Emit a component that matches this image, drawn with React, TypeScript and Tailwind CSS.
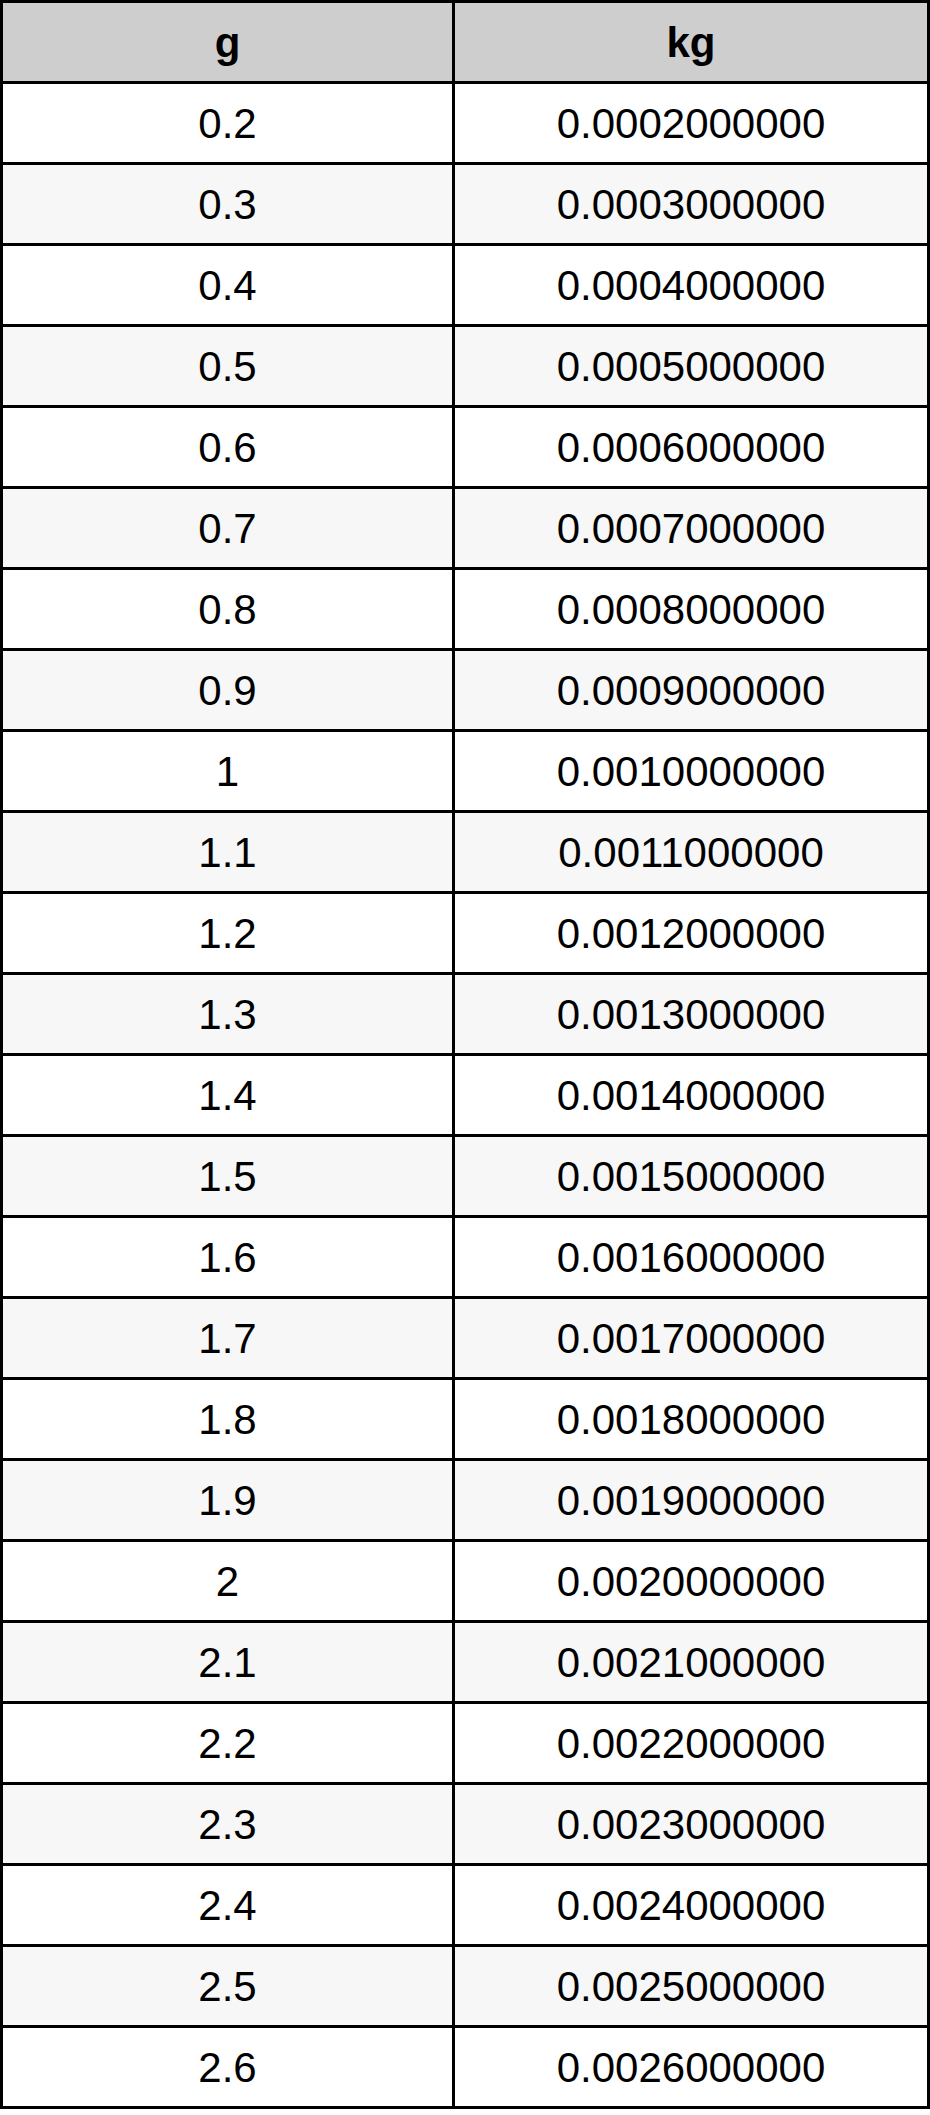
import React from "react";

const rows: [string, string][] = [
  ["0.2", "0.0002000000"],
  ["0.3", "0.0003000000"],
  ["0.4", "0.0004000000"],
  ["0.5", "0.0005000000"],
  ["0.6", "0.0006000000"],
  ["0.7", "0.0007000000"],
  ["0.8", "0.0008000000"],
  ["0.9", "0.0009000000"],
  ["1", "0.0010000000"],
  ["1.1", "0.0011000000"],
  ["1.2", "0.0012000000"],
  ["1.3", "0.0013000000"],
  ["1.4", "0.0014000000"],
  ["1.5", "0.0015000000"],
  ["1.6", "0.0016000000"],
  ["1.7", "0.0017000000"],
  ["1.8", "0.0018000000"],
  ["1.9", "0.0019000000"],
  ["2", "0.0020000000"],
  ["2.1", "0.0021000000"],
  ["2.2", "0.0022000000"],
  ["2.3", "0.0023000000"],
  ["2.4", "0.0024000000"],
  ["2.5", "0.0025000000"],
  ["2.6", "0.0026000000"],
];

export default function App() {
  return (
    <div className="w-[930px] bg-white" style={{ fontFamily: '"Liberation Sans", Arial, sans-serif' }}>
      <div className="grid grid-cols-[449px_472px] gap-[3px] p-[3px] bg-black text-[42px] text-black">
        <div className="h-[78px] bg-[#cecece] flex items-center justify-center font-bold">g</div>
        <div className="h-[78px] bg-[#cecece] flex items-center justify-center font-bold">kg</div>
        {rows.map(([g, kg], i) => (
          <React.Fragment key={g}>
            <div className={`h-[78px] flex items-center justify-center ${i % 2 === 0 ? "bg-white" : "bg-[#f7f7f7]"}`}>{g}</div>
            <div className={`h-[78px] flex items-center justify-center ${i % 2 === 0 ? "bg-white" : "bg-[#f7f7f7]"}`}>{kg}</div>
          </React.Fragment>
        ))}
      </div>
    </div>
  );
}
